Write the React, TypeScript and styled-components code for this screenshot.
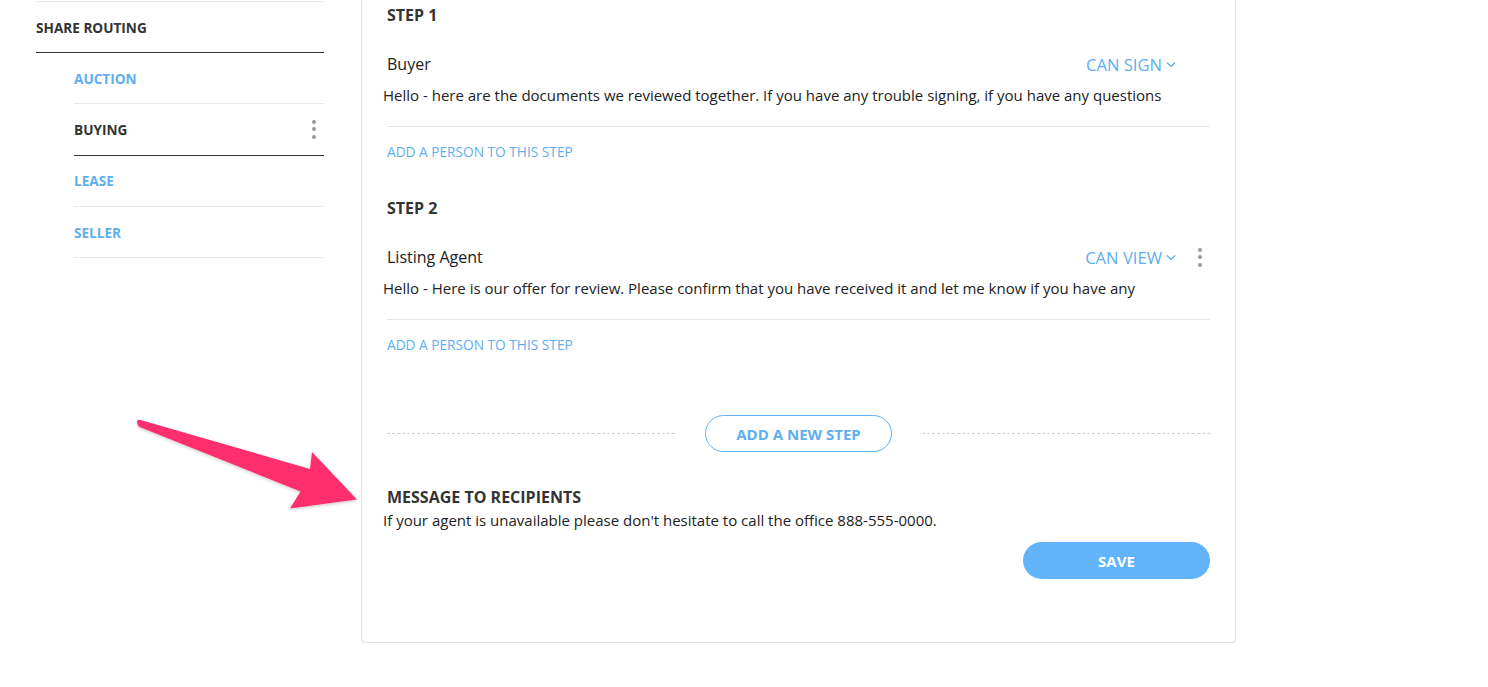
import React from 'react'
import styled, { createGlobalStyle } from 'styled-components'

const GlobalStyle = createGlobalStyle`
  html, body {
    margin: 0;
    padding: 0;
    background: #ffffff;
    font-family: 'Open Sans', 'Noto Sans', sans-serif;
    color: #333333;
  }
`

const BLUE = '#5eaff0'

const Page = styled.div`
  position: relative;
  display: flex;
  align-items: flex-start;
  gap: 37px;
  padding-left: 36px;
  width: 1488px;
  height: 687px;
  overflow: hidden;
  box-sizing: border-box;
`

const Sidebar = styled.nav`
  width: 288px;
  flex-shrink: 0;
  border-top: 1px solid #e8e8e8;
  margin-top: 1px;
`

const SectionHead = styled.div`
  height: 50px;
  display: flex;
  align-items: center;
  font-size: 13.6px;
  font-weight: 700;
  color: #333;
  border-bottom: 1px solid #333;
`

const SubList = styled.ul`
  list-style: none;
  margin: 0;
  padding: 0 0 0 38px;
`

const SubItem = styled.li<{ $active?: boolean }>`
  height: 50.3px;
  display: flex;
  align-items: center;
  justify-content: space-between;
  font-size: 13.6px;
  font-weight: 700;
  color: ${({ $active }) => ($active ? '#333' : BLUE)};
  border-bottom: 1px solid ${({ $active }) => ($active ? '#333' : '#e8e8e8')};
`

const Kebab = styled.span`
  display: flex;
  flex-direction: column;
  gap: 3.5px;
  width: 20px;
  align-items: center;

  & > i {
    display: block;
    width: 4px;
    height: 4px;
    border-radius: 50%;
    background: #999;
  }
`

const Card = styled.section`
  width: 875px;
  box-sizing: border-box;
  border: 1px solid #e2e2e2;
  border-top: none;
  border-radius: 0 0 4px 4px;
  padding: 0 25px 63px 25px;
  flex-shrink: 0;
`

const Step = styled.div`
  padding-bottom: 16px;
`

const StepTitle = styled.h3`
  margin: 0;
  height: 30px;
  line-height: 30px;
  font-size: 16px;
  font-weight: 700;
  color: #333;
`

const PersonRow = styled.div`
  margin-top: 20px;
  height: 28px;
  display: flex;
  align-items: center;
  justify-content: space-between;
`

const PersonName = styled.span`
  font-size: 16px;
  color: #222;
`

const PersonActions = styled.div`
  display: flex;
  align-items: center;
`

const Permission = styled.span`
  display: flex;
  align-items: center;
  gap: 4px;
  font-size: 16.6px;
  color: ${BLUE};
`

const KebabSlot = styled.div`
  width: 34px;
  display: flex;
  justify-content: flex-end;
`

const Message = styled.div<{ $clip: number }>`
  margin: 6px 0 0 -4px;
  height: ${({ $clip }) => $clip}px;
  overflow: hidden;
  font-size: 15px;
  line-height: 22px;
  color: #222;
  padding-right: 40px;
`

const Divider = styled.hr<{ $gap: number }>`
  margin: ${({ $gap }) => $gap}px 0 0;
  border: none;
  border-top: 1px solid #e6e6e6;
`

const AddPerson = styled.div`
  height: 50px;
  line-height: 50px;
  font-size: 13.7px;
  color: ${BLUE};
`

const NewStepRow = styled.div`
  margin-top: 29px;
  display: flex;
  align-items: center;
  gap: 30px;
`

const Dashed = styled.div`
  flex: 1;
  border-top: 1px dashed #cfcfcf;
`

const OutlineButton = styled.button`
  width: 187px;
  height: 37px;
  border: 1px solid ${BLUE};
  border-radius: 19px;
  background: #fff;
  color: ${BLUE};
  font-family: inherit;
  font-size: 15px;
  font-weight: 700;
`

const MessageTitle = styled.h3`
  margin: 34px 0 0;
  line-height: 22px;
  font-size: 16px;
  font-weight: 700;
  color: #333;
`

const MessageText = styled.p`
  margin: 1px 0 0 -4px;
  line-height: 22px;
  font-size: 15px;
  color: #222;
`

const Actions = styled.div`
  margin-top: 11px;
  display: flex;
  justify-content: flex-end;
`

const SaveButton = styled.button`
  width: 187px;
  height: 37px;
  border: none;
  border-radius: 19px;
  background: #62b4fa;
  color: #fff;
  font-family: inherit;
  font-size: 15px;
  font-weight: 700;
`

const ArrowLayer = styled.svg`
  position: absolute;
  left: 0;
  top: 0;
  pointer-events: none;
`

const Dots = () => (
  <Kebab>
    <i />
    <i />
    <i />
  </Kebab>
)

const Chevron = () => (
  <svg width="10" height="7" viewBox="0 0 10 7">
    <path d="M1 1.5 L5 5.5 L9 1.5" fill="none" stroke={BLUE} strokeWidth="1.3" />
  </svg>
)

interface StepData {
  title: string
  person: string
  permission: string
  message: string
  clip: number
  menu: boolean
}

const steps: StepData[] = [
  {
    title: 'STEP 1',
    person: 'Buyer',
    permission: 'CAN SIGN',
    message:
      'Hello - here are the documents we reviewed together. If you have any trouble signing, if you have any questions about anything, please don\u2019t hesitate to call me at any time.',
    clip: 28,
    menu: false,
  },
  {
    title: 'STEP 2',
    person: 'Listing Agent',
    permission: 'CAN VIEW',
    message:
      'Hello - Here is our offer for review. Please confirm that you have received it and let me know if you have any questions.',
    clip: 24,
    menu: true,
  },
]

const StepBlock = ({ step }: { step: StepData }) => (
  <Step>
    <StepTitle>{step.title}</StepTitle>
    <PersonRow>
      <PersonName>{step.person}</PersonName>
      <PersonActions>
        <Permission>
          {step.permission}
          <Chevron />
        </Permission>
        <KebabSlot>{step.menu && <Dots />}</KebabSlot>
      </PersonActions>
    </PersonRow>
    <Message $clip={step.clip}>{step.message}</Message>
    <Divider $gap={42 - step.clip} />
    <AddPerson>ADD A PERSON TO THIS STEP</AddPerson>
  </Step>
)

const App = () => {
  return (
    <>
      <GlobalStyle />
      <Page>
        <Sidebar>
          <SectionHead>SHARE ROUTING</SectionHead>
          <SubList>
            <SubItem>AUCTION</SubItem>
            <SubItem $active>
              BUYING
              <Dots />
            </SubItem>
            <SubItem>LEASE</SubItem>
            <SubItem>SELLER</SubItem>
          </SubList>
        </Sidebar>

        <Card>
          {steps.map((s) => (
            <StepBlock key={s.title} step={s} />
          ))}
          <NewStepRow>
            <Dashed />
            <OutlineButton>ADD A NEW STEP</OutlineButton>
            <Dashed />
          </NewStepRow>
          <MessageTitle>MESSAGE TO RECIPIENTS</MessageTitle>
          <MessageText>
            If your agent is unavailable please don't hesitate to call the office 888-555-0000.
          </MessageText>
          <Actions>
            <SaveButton>SAVE</SaveButton>
          </Actions>
        </Card>

        <ArrowLayer width="1488" height="687" viewBox="0 0 1488 687">
          <defs>
            <filter id="arrowShadow" x="-10%" y="-10%" width="120%" height="130%">
              <feDropShadow dx="0" dy="1.5" stdDeviation="1.5" floodColor="#000" floodOpacity="0.18" />
            </filter>
          </defs>
          <path
            d="M137.5 420.5 Q136 424 139.5 427 L300.5 491.5 L290 508.5 L357 499.5 L312 452 L310 469 L140.5 420 Q138.5 419.5 137.5 420.5 Z"
            fill="#ff2f6c"
            filter="url(#arrowShadow)"
          />
        </ArrowLayer>
      </Page>
    </>
  )
}

export default App
